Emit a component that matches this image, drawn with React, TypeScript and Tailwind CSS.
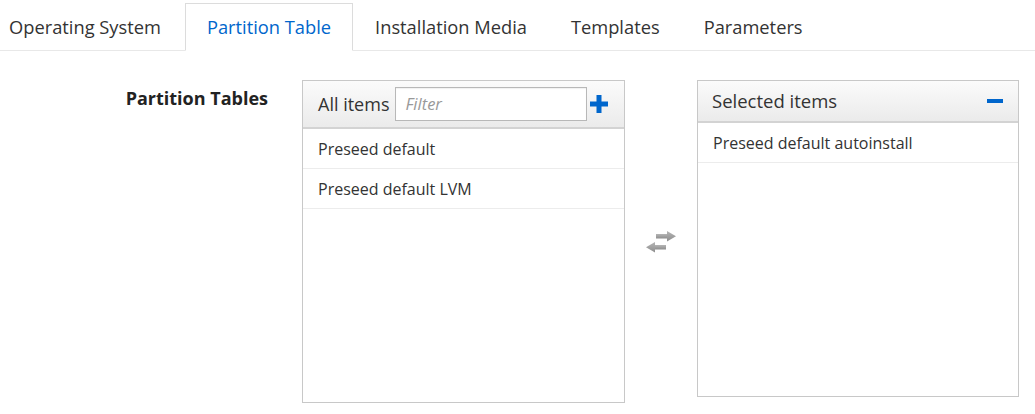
import React from "react";

const font = { fontFamily: '"Open Sans", "Liberation Sans", sans-serif' };

function Tabs() {
  const tabs = ["Operating System", "Partition Table", "Installation Media", "Templates", "Parameters"];
  return (
    <div className="flex h-[51px] border-b border-[#e8e8e8] items-end">
      {tabs.map((t, i) => {
        const active = i === 1;
        return (
          <div
            key={t}
            className={
              "h-[48px] mb-[-1px] flex items-center whitespace-nowrap text-[18.3px] " +
              (i === 0 ? "pl-[8px] pr-[23px] " : "px-[21px] ") +
              (active
                ? "bg-white border border-[#dcdcdc] border-b-white text-[#0066cc]"
                : "border border-transparent text-[#333]")
            }
          >
            {t}
          </div>
        );
      })}
    </div>
  );
}

function PlusIcon() {
  return (
    <svg width="18" height="18" viewBox="0 0 18 18">
      <rect x="6.5" y="0" width="5" height="18" fill="#0066cc" />
      <rect x="0" y="6.5" width="18" height="5" fill="#0066cc" />
    </svg>
  );
}

function MinusIcon() {
  return (
    <svg width="16" height="5" viewBox="0 0 16 5">
      <rect x="0" y="0" width="16" height="4" fill="#0066cc" />
    </svg>
  );
}

function SwapIcon() {
  return (
    <svg width="30" height="22" viewBox="0 0 30 22">
      <defs>
        <linearGradient id="g" x1="0" y1="0" x2="0" y2="1">
          <stop offset="0" stopColor="#b5b5b5" />
          <stop offset="1" stopColor="#8e8e8e" />
        </linearGradient>
      </defs>
      <rect x="10" y="3" width="13" height="4.5" fill="url(#g)" />
      <polygon points="21,0 30,5.2 21,10.5" fill="url(#g)" />
      <rect x="7" y="14" width="13" height="4.5" fill="url(#g)" />
      <polygon points="9,11 0,16.2 9,21.5" fill="url(#g)" />
    </svg>
  );
}

function Row({ text }: { text: string }) {
  return (
    <div className="h-[40px] flex items-center px-[15px] border-b border-[#ececec] text-[16px] text-[#333] whitespace-nowrap">
      {text}
    </div>
  );
}

export default function App() {
  return (
    <div className="w-[1035px] h-[414px] bg-white overflow-hidden" style={font}>
      <Tabs />
      <div className="flex items-start mt-[29px]">
        <div className="w-[268px] shrink-0 text-right pt-[6px] text-[18px] font-bold text-[#222] leading-[24px] whitespace-nowrap">
          Partition Tables
        </div>
        <div className="ml-[34px] w-[323px] shrink-0 border border-[#c8c8c8]">
          <div className="h-[48px] flex items-center pl-[15px] bg-linear-to-b from-[#fbfbfb] to-[#ebebeb] border-b-2 border-[#d3d3d3]">
            <span className="text-[18px] text-[#333] mr-[6px] whitespace-nowrap shrink-0">All items</span>
            <div className="w-[192px] shrink-0 h-[34px] border border-[#b8b8b8] bg-white flex items-center px-[9px] text-[16.5px] italic text-[#999] shadow-[inset_0_1px_1px_rgba(0,0,0,0.06)]">
              Filter
            </div>
            <div className="ml-[3px] shrink-0 flex items-center">
              <PlusIcon />
            </div>
          </div>
          <div className="h-[273px]">
            <Row text="Preseed default" />
            <Row text="Preseed default LVM" />
          </div>
        </div>
        <div className="w-[72px] shrink-0 h-[324px] flex items-center justify-center">
          <SwapIcon />
        </div>
        <div className="w-[322px] shrink-0 border border-[#c8c8c8]">
          <div className="h-[42px] flex items-center justify-between pl-[14px] pr-[15px] bg-linear-to-b from-[#fbfbfb] to-[#ebebeb] border-b-2 border-[#d3d3d3]">
            <span className="text-[18.5px] text-[#333] whitespace-nowrap">Selected items</span>
            <MinusIcon />
          </div>
          <div className="h-[273px]">
            <Row text="Preseed default autoinstall" />
          </div>
        </div>
      </div>
    </div>
  );
}
